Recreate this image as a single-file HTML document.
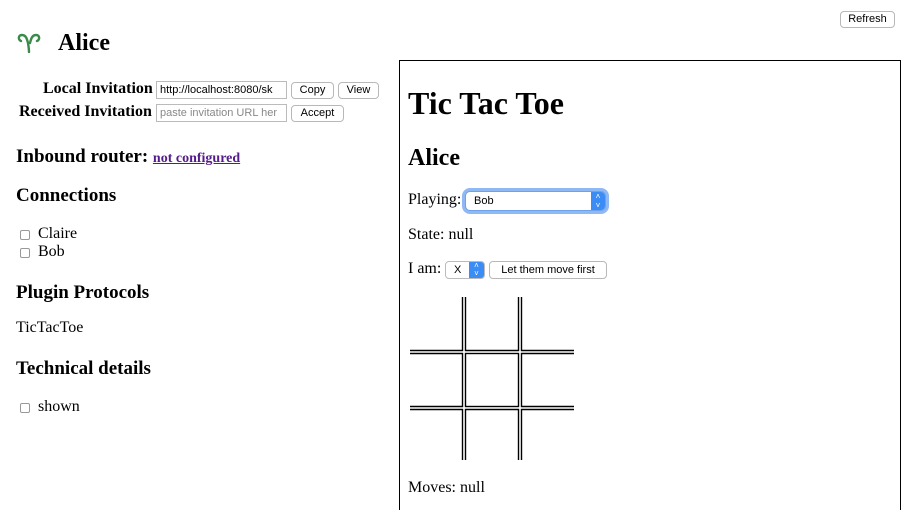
<!DOCTYPE html>
<html style="width:906px;height:510px;overflow:hidden"><head><style>
body{margin:0;width:906px;height:510px;overflow:hidden;font-family:"Liberation Serif",serif;background:#fff;color:#000;position:relative}
.a{position:absolute;white-space:nowrap}
.btn{position:absolute;border:1px solid #b8b8b8;border-radius:4px;background:#fff;font:11px "Liberation Sans",sans-serif;text-align:center;box-sizing:border-box;line-height:14px}
.inp{position:absolute;border:1px solid #bbb;font:11px "Liberation Sans",sans-serif;box-sizing:border-box;padding:2px 3px;overflow:hidden;white-space:nowrap;line-height:12px}
h2{margin:0;font-size:19px;font-weight:bold}
.cb{position:absolute;width:10px;height:10px;border:1px solid #999;border-radius:2px;box-sizing:border-box}
</style></head><body>
<div class="btn" style="left:840px;top:11px;width:55px;height:17px">Refresh</div>
<svg style="position:absolute;left:17px;top:33px" width="24" height="20" viewBox="0 0 24 20"><path d="M4 8 C1 7,1 2,5 2 C9 2,10 6,11 10 C11.5 13,12 16,12 19 M20 8 C23 7,23 2,19 2 C15 2,14 6,13 10" fill="none" stroke="#3a8a4a" stroke-width="2.4" stroke-linecap="round"/></svg>
<div class="a" style="left:58px;top:30px;font-size:24px;font-weight:bold">Alice</div>
<div class="a" style="left:43px;top:80px;font-size:16px;font-weight:bold">Local Invitation</div>
<div class="a" style="left:19px;top:103px;font-size:16px;font-weight:bold">Received Invitation</div>
<div class="inp" style="left:156px;top:81px;width:131px;height:18px">http://localhost:8080/sk</div>
<div class="inp" style="left:156px;top:104px;width:131px;height:18px;color:#888">paste invitation URL her</div>
<div class="btn" style="left:291px;top:82px;width:43px;height:17px">Copy</div>
<div class="btn" style="left:338px;top:82px;width:41px;height:17px">View</div>
<div class="btn" style="left:291px;top:105px;width:53px;height:17px">Accept</div>
<div class="a" style="left:16px;top:146px"><h2>Inbound router: <a style="font-size:14px;color:#551a8b;text-decoration:underline">not configured</a></h2></div>
<div class="a" style="left:16px;top:185px"><h2>Connections</h2></div>
<div class="cb" style="left:20px;top:230px"></div><div class="a" style="left:38px;top:225px;font-size:16px">Claire</div>
<div class="cb" style="left:20px;top:248px"></div><div class="a" style="left:38px;top:243px;font-size:16px">Bob</div>
<div class="a" style="left:16px;top:282px"><h2>Plugin Protocols</h2></div>
<div class="a" style="left:16px;top:319px;font-size:16px">TicTacToe</div>
<div class="a" style="left:16px;top:358px"><h2>Technical details</h2></div>
<div class="cb" style="left:20px;top:403px"></div><div class="a" style="left:38px;top:398px;font-size:16px">shown</div>

<div style="position:absolute;left:399px;top:60px;width:502px;height:460px;border:1px solid #000;box-sizing:border-box"></div>
<div class="a" style="left:408px;top:85px;font-size:32px;font-weight:bold">Tic Tac Toe</div>
<div class="a" style="left:408px;top:145px;font-size:24px;font-weight:bold">Alice</div>
<div class="a" style="left:408px;top:191px;font-size:16px">Playing:</div>
<div style="position:absolute;left:465px;top:191px;width:141px;height:20px;border-radius:5px;box-shadow:0 0 0 3px #8fb9f3;border:1px solid #6fa0e8;box-sizing:border-box;background:#fff;font:11px 'Liberation Sans',sans-serif;line-height:18px;padding-left:8px">Bob<div style="position:absolute;right:0;top:0;width:14px;height:18px;background:#3c8cf5;border-radius:0 4px 4px 0;color:#fff;font-size:8px;line-height:9px;text-align:center">˄<br>˅</div></div>
<div class="a" style="left:408px;top:226px;font-size:16px">State: null</div>
<div class="a" style="left:408px;top:260px;font-size:16px">I am:</div>
<div style="position:absolute;left:445px;top:261px;width:40px;height:18px;border:1px solid #bbb;border-radius:4px;box-sizing:border-box;font:11px 'Liberation Sans',sans-serif;line-height:16px;padding-left:8px">X<div style="position:absolute;right:0;top:0;width:15px;height:16px;background:#3c8cf5;border-radius:0 3px 3px 0;color:#fff;font-size:8px;line-height:8px;text-align:center">˄<br>˅</div></div>
<div class="btn" style="left:489px;top:261px;width:118px;height:18px;line-height:16px">Let them move first</div>
<svg style="position:absolute;left:0;top:0" width="906" height="510">
<g stroke="#000" stroke-width="1.4" fill="none">
<path d="M410 350.5 H462.5 V297"/>
<path d="M465.5 297 V350.5 H518.5 V297"/>
<path d="M521.5 297 V350.5 H574"/>
<path d="M410 353.5 H462.5 V406.5 H410"/>
<rect x="465.5" y="353.5" width="53" height="53"/>
<path d="M574 353.5 H521.5 V406.5 H574"/>
<path d="M410 409.5 H462.5 V460"/>
<path d="M465.5 460 V409.5 H518.5 V460"/>
<path d="M521.5 460 V409.5 H574"/>
</g>
</svg>
<div class="a" style="left:408px;top:479px;font-size:16px">Moves: null</div>
</body></html>
